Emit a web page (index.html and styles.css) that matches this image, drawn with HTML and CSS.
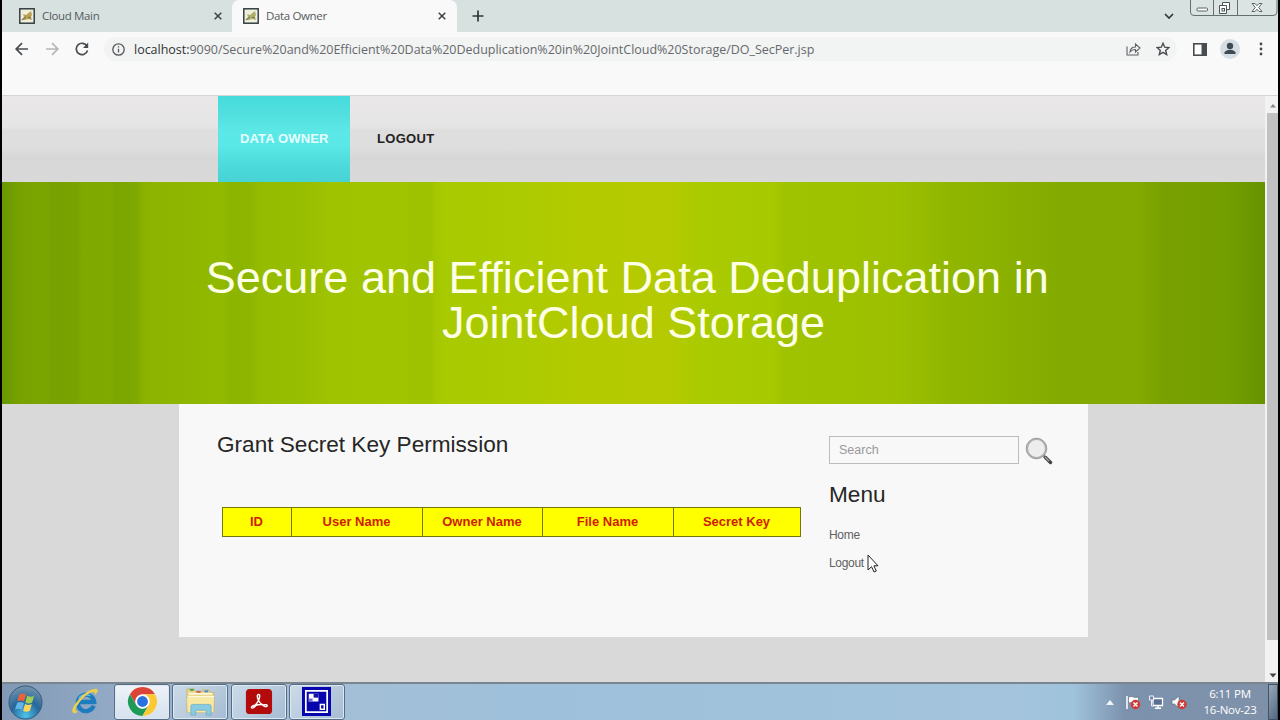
FILE: index.html
```html
<!DOCTYPE html>
<html lang="en">
<head>
  <meta charset="UTF-8">
  <title>Data Owner</title>
  <link rel="stylesheet" href="styles.css">
</head>
<body>
  <div class="screen">
    <div class="tabstrip">
      <div class="tab">
        <svg class="favicon" viewBox="0 0 16 16"><rect x=".8" y=".8" width="14.4" height="14.4" fill="#f0eedc" stroke="#263238" stroke-width="1.4"/><path d="M2 12l3-3-1-3 3 1 5-4 1 4-1 2 1 3-4-1-3 1z" fill="#b9a254"/><path d="M3 12l4-3M9 9l3 1" stroke="#6d7454" fill="none"/></svg>
        <span class="tab-title">Cloud Main</span>
        <svg class="close" viewBox="0 0 8 8"><path d="M.7.7l6.6 6.6M7.3.7L.7 7.3"/></svg>
      </div>
      <div class="tab active">
        <svg class="favicon" viewBox="0 0 16 16"><rect x=".8" y=".8" width="14.4" height="14.4" fill="#f0eedc" stroke="#263238" stroke-width="1.4"/><path d="M2 12l3-3-1-3 3 1 5-4 1 4-1 2 1 3-4-1-3 1z" fill="#aeb06a"/><path d="M3 12l4-3M9 9l3 1" stroke="#6d7454" fill="none"/></svg>
        <span class="tab-title">Data Owner</span>
        <svg class="close" viewBox="0 0 8 8"><path d="M.7.7l6.6 6.6M7.3.7L.7 7.3"/></svg>
      </div>
      <svg class="new-tab" viewBox="0 0 12 12"><path d="M6 .5v11M.5 6h11"/></svg>
      <svg class="tab-search" viewBox="0 0 10 6"><path d="M1 1l4 4 4-4"/></svg>
      <svg class="win-buttons" viewBox="0 0 88 16">
        <path d="M.5-1v13q0 3.500 3.500 3.500h79q4 0 4-3.500V-1M23.500 0v15.500M47.500 0v15.500" fill="#dbe4e3" stroke="#64706e"/>
        <rect x="7" y="8" width="10.500" height="3" rx="1" fill="#fff" stroke="#5b6462"/>
        <path d="M32.500 2.500h7v7h-7z" fill="#fff" stroke="#4c5553"/>
        <path d="M29.500 5.500h7v8h-7z" fill="#fff" stroke="#4c5553"/><rect x="32" y="8.500" width="2.500" height="2.500" fill="none" stroke="#4c5553"/>
        <path d="M62 3.500h3l2 2.200 2-2.200h3l-3.300 4 3.300 4h-3l-2-2.200-2 2.200h-3l3.300-4z" fill="#fff" stroke="#5b6462"/>
      </svg>
    </div>
    <div class="toolbar">
      <svg class="nav-icon" viewBox="0 0 14 14"><path d="M13 7H1.500M7 1.200L1.200 7 7 12.800"/></svg>
      <svg class="nav-icon dim" viewBox="0 0 14 14"><path d="M1 7h11.500M7 1.200L12.800 7 7 12.800"/></svg>
      <svg class="nav-icon" viewBox="0 0 14 14"><path d="M12 4.200A5.700 5.700 0 1 0 12.500 8.500"/><path d="M13.200.6v5.300H8z" fill="#484c50" stroke="none"/></svg>
      <div class="address">
        <svg class="info" viewBox="0 0 13 13"><circle cx="6.500" cy="6.500" r="5.700"/><path d="M6.500 5.800v3.800M6.500 3.200v1.400"/></svg>
        <span class="url"><b>localhost:</b>9090/Secure%20and%20Efficient%20Data%20Deduplication%20in%20JointCloud%20Storage/DO_SecPer.jsp</span>
        <svg class="share" viewBox="0 0 15 14"><path d="M1 4.500V13h11v-3"/><path d="M4 10q.5-5 5.500-5V2L14 6 9.500 10V7.500Q6 7.300 4 10z"/></svg>
        <svg class="star" viewBox="0 0 14 14"><path d="M7 1.300l1.700 3.900 4.200.4-3.200 2.800 1 4.200L7 10.400l-3.700 2.200 1-4.200L1.100 5.600l4.200-.4z"/></svg>
      </div>
      <svg class="panel" viewBox="0 0 14 13"><rect x=".8" y=".8" width="12.400" height="11.400" fill="#fff" stroke="#484c50" stroke-width="1.600"/><path d="M8.500 0H14v13H8.500z" fill="#484c50"/></svg>
      <svg class="avatar" viewBox="0 0 20 20"><circle cx="10" cy="10" r="10" fill="#d6dde3"/><circle cx="10" cy="7" r="3.200" fill="#3f4a57"/><path d="M4.500 15v-1.500q1.500-2.800 5.500-2.800t5.500 2.800V15z" fill="#3f4a57"/></svg>
      <svg class="dots" viewBox="0 0 4 14"><circle cx="2" cy="2" r="1.400"/><circle cx="2" cy="7" r="1.400"/><circle cx="2" cy="12" r="1.400"/></svg>
    </div>
    <div class="bookmarks"></div>

    <div class="viewport">
      <div class="page">
        <div class="menubar">
          <a class="selected">DATA OWNER</a>
          <a>LOGOUT</a>
        </div>
        <div class="header">
          <h1>Secure and Efficient Data Deduplication in&nbsp;<br>JointCloud Storage</h1>
        </div>
        <div class="content">
          <div class="mainbar">
            <h2>Grant Secret Key Permission</h2>
            <table>
              <tr>
                <th class="col-id">ID</th>
                <th class="col-user">User Name</th>
                <th class="col-owner">Owner Name</th>
                <th class="col-file">File Name</th>
                <th class="col-key">Secret Key</th>
              </tr>
            </table>
          </div>
          <div class="sidebar">
            <div class="search">
              <div class="search-box">Search</div>
              <svg class="lens" viewBox="0 0 28 28"><path d="M18 18l3 3" stroke="#999" stroke-width="3"/><path d="M20.500 20.500l5 5" stroke="#444" stroke-width="3.400" stroke-linecap="round"/><path d="M20 20l4 4" stroke="#aaa" stroke-width="1.200"/><circle cx="11.500" cy="11.500" r="9.300" fill="#ededed" stroke="#b2b2b2" stroke-width="1.800"/><circle cx="11.500" cy="11.500" r="10.300" fill="none" stroke="#808080" stroke-width=".7"/></svg>
            </div>
            <h2>Menu</h2>
            <ul>
              <li>Home</li>
              <li>Logout</li>
            </ul>
            <svg class="cursor" viewBox="0 0 12 19"><path d="M1 1v15l3.600-3.300L7 18l2.300-1-2.400-5.200H11z" fill="#fff" stroke="#222"/></svg>
          </div>
        </div>
      </div>
      <div class="scrollbar">
        <svg viewBox="0 0 8 5"><path d="M1 4.500L4 1l3 3.500z" fill="#888"/></svg>
        <div class="thumb"></div>
        <svg viewBox="0 0 8 5"><path d="M.5.500L4 4.500 7.500.5z" fill="#444"/></svg>
      </div>
    </div>

    <div class="taskbar">
      <svg class="start" viewBox="0 0 36 36">
        <defs>
          <radialGradient id="orb" cx=".5" cy=".9" r=".9"><stop offset="0" stop-color="#4cc4ea"/><stop offset=".5" stop-color="#27679b"/><stop offset="1" stop-color="#7895ac"/></radialGradient>
        </defs>
        <circle cx="18" cy="18" r="17" fill="url(#orb)" stroke="#31597c"/>
        <path d="M11.500 10q3.500-2.300 7 0l-2 7q-3.500-2-7 0z" fill="#e8633a"/>
        <path d="M19.800 11q3.500 2 7 0l-2 7q-3.500 2-7 0z" fill="#9fce55"/>
        <path d="M9.300 18.500q3.500-2 7 0l-2 7q-3.500-2-7 0z" fill="#62b5ea"/>
        <path d="M17.500 19.500q3.500 2 7 0l-2 7q-3.500 2-7 0z" fill="#fbd65a"/>
      </svg>
      <svg class="ie" viewBox="0 0 32 32">
        <path d="M25.500 21.500A8.500 8.500 0 1 1 26 17.500H11" fill="none" stroke="#1c7cbe" stroke-width="4.500"/>
        <path d="M10 14q4-6 12-3" fill="none" stroke="#62bdec" stroke-width="1.500"/>
        <path d="M5 29Q0 27 10 15T29 4q2 2-2 6 0-4-5-2Q14 12 8 22 5 27 9 27 7 30 5 29z" fill="#edcf4c"/>
      </svg>
      <div class="task on">
        <svg viewBox="0 0 32 32"><circle cx="16" cy="16" r="15" fill="#fff"/><path d="M3 8.500A15 15 0 0 1 29 8.500H16a7.500 7.500 0 0 0-6.500 11.200z" fill="#dc4437"/><path d="M3 8.500A15 15 0 0 0 16 31l6.500-11.300a7.500 7.500 0 0 1-13 0z" fill="#1d9a57"/><path d="M29 8.500A15 15 0 0 1 16 31l6.500-11.300A7.500 7.500 0 0 0 16 8.500z" fill="#fcc934"/><circle cx="16" cy="16" r="7" fill="#fff"/><circle cx="16" cy="16" r="5.600" fill="#2a72dd"/></svg>
      </div>
      <div class="task">
        <svg viewBox="0 0 32 32"><path d="M2 3h8l1 3h7V4h7l1 3h4v20H2V7z" fill="#ead98e" stroke="#c5ad62" stroke-width=".7"/><path d="M4 8h24M3 11h27" stroke="#fffbe0" stroke-width="1.500"/><path d="M5 4h4" stroke="#43a35a" stroke-width="2"/><path d="M12 6h4" stroke="#d15f52" stroke-width="2"/><path d="M20 5.500h4" stroke="#4689ca" stroke-width="2"/><path d="M2 12h28l-1 15H3z" fill="#f7e8a4"/><path d="M6 30V21q0-2 2-2h17q2 0 2 2v9h-5v-5H11v5z" fill="#8acbe4" stroke="#62a9c7" stroke-width=".7"/></svg>
      </div>
      <div class="task">
        <svg viewBox="0 0 32 32"><rect x="3" y="3" width="27" height="26" rx="4" fill="#b30b0b"/><path d="M16 15q-2.500-6 0-6.200t0 6.200q2 4 5 4.500 4-.8 4 .8c-.5 2-3.500.5-5-1q-4-.5-7 .8-2.500 3.500-4 2.500c-1.500-1.300 2-2.300 4-3.200q1.800-2 3-4.400z" fill="none" stroke="#fff" stroke-width="1.500"/></svg>
      </div>
      <div class="task">
        <svg viewBox="0 0 32 32"><path d="M1 1h30v30H1z" fill="#0705ad"/><path d="M5 5h22v22H5z" fill="none" stroke="#fff" stroke-width="1.800"/><path d="M8 8h10v8H8z" fill="#fff"/><path d="M13 8h5v4h-5z" fill="#1510a8"/><path d="M8 13h4v3H8z" fill="#6d6bd2"/><path d="M20 19h4v5h-4z" fill="none" stroke="#fff" stroke-width="1.500"/></svg>
      </div>
      <div class="tray">
        <svg class="tray-up" viewBox="0 0 8 5"><path d="M0 5l4-5 4 5z" fill="#f1f5fa"/></svg>
        <svg viewBox="0 0 16 16"><path d="M2 2v13" stroke="#fff" stroke-width="1.500"/><path d="M3.500 3q3-1 5 0t5 0v6q-3 1-5 0t-5 0z" fill="#fff" stroke="#59657b" stroke-width=".6"/><circle cx="10.500" cy="10.500" r="4.700" fill="#cf3a36"/><path d="M8.500 8.500l4 4m0-4l-4 4" stroke="#fff" stroke-width="1.400"/></svg>
        <svg viewBox="0 0 16 16"><path d="M5 4.500h9.500v7H5z" fill="#596f92" stroke="#fff" stroke-width="1.300"/><path d="M7 14.200h6M10 12v2" stroke="#fff" stroke-width="1.500"/><path d="M1.500 2h4v4h-4zM3.500 6v6H5" fill="#74859e" stroke="#eef"/></svg>
        <svg viewBox="0 0 16 16"><path d="M1 6h2.500L8 2v12l-4.500-4H1z" fill="#fff" stroke="#5d697d" stroke-width=".6"/><circle cx="11" cy="10.500" r="4.700" fill="#cf3a36"/><path d="M9 8.500l4 4m0-4l-4 4" stroke="#fff" stroke-width="1.400"/></svg>
      </div>
      <div class="clock">
        <span>6:11 PM</span>
        <span>16-Nov-23</span>
      </div>
      <div class="show-desktop"></div>
    </div>
  </div>
</body>
</html>
```
FILE: styles.css
```css
* {
  box-sizing: border-box;
}
body {
  margin: 0;
  background: #000;
  font-family: "Liberation Sans", Arial, sans-serif;
  overflow: hidden;
}
h1, h2, ul {
  margin: 0;
  padding: 0;
  font-weight: normal;
}
svg {
  display: block;
  flex: none;
}
.screen {
  width: 1276px;
  height: 720px;
  margin: 0 2px;
  display: flex;
  flex-direction: column;
}

/* browser window */
.tabstrip {
  height: 32px;
  background: #d7e1df;
  display: flex;
  align-items: center;
}
.tab {
  width: 230px;
  height: 32px;
  padding: 0 10px 0 17px;
  display: flex;
  align-items: center;
  font: 11.5px "Open Sans", sans-serif;
  color: #555b5d;
}
.tab.active {
  width: 225px;
  padding: 0 11px 0 11px;
  background: #f9f9f9;
  border-radius: 7px 7px 0 0;
}
.favicon {
  width: 16px;
  height: 16px;
  margin-right: 7px;
}
.tab-title {
  flex: 1;
  padding-bottom: 1px;
  letter-spacing: -0.35px;
}
.close {
  width: 8px;
  height: 8px;
  fill: none;
  stroke: #3c4244;
  stroke-width: 1.5;
}
.new-tab {
  width: 12px;
  height: 12px;
  margin-left: 15px;
  stroke: #30373a;
  stroke-width: 1.7;
}
.tab-search {
  width: 10px;
  height: 6px;
  margin-left: auto;
  margin-right: 16px;
  fill: none;
  stroke: #30373a;
  stroke-width: 1.7;
}
.win-buttons {
  width: 88px;
  height: 16px;
  align-self: flex-start;
}
.toolbar {
  height: 34px;
  padding: 0 15px 0 13px;
  background: #f9f9f9;
  display: flex;
  align-items: center;
}
.nav-icon {
  width: 14px;
  height: 14px;
  margin-right: 16px;
  fill: none;
  stroke: #484c50;
  stroke-width: 1.7;
}
.nav-icon.dim {
  stroke: #b4b6b8;
}
.address {
  width: 1073px;
  height: 24px;
  margin-left: -1px;
  padding-left: 8px;
  display: flex;
  align-items: center;
  background: #f2f3f3;
  border-radius: 12px;
}
.info {
  width: 13px;
  height: 13px;
  margin-right: 9px;
  fill: none;
  stroke: #53585c;
  stroke-width: 1.3;
}
.url {
  flex: 1;
  font: 12.5px "Open Sans", sans-serif;
  letter-spacing: -0.02px;
  color: #66696c;
  white-space: nowrap;
}
.url b {
  font-weight: normal;
  color: #303336;
}
.share {
  width: 15px;
  height: 14px;
  margin-right: 15px;
  fill: none;
  stroke: #5c6165;
  stroke-width: 1.1;
}
.star {
  width: 14px;
  height: 14px;
  margin-right: 7px;
  fill: none;
  stroke: #484c50;
  stroke-width: 1.4;
}
.panel {
  width: 14px;
  height: 13px;
  margin-left: auto;
}
.avatar {
  width: 20px;
  height: 20px;
  margin: 0 19px 0 13px;
}
.dots {
  width: 4px;
  height: 14px;
  fill: #484c50;
}
.bookmarks {
  height: 29px;
  background: #f9f9f9;
}
.viewport {
  height: 587px;
  display: flex;
  border-top: 1px solid #d6d5d5;
}
.scrollbar {
  width: 13px;
  padding: 7px 0 4px 2px;
  background: #f2f2f2;
  display: flex;
  flex-direction: column;
  align-items: center;
}
.scrollbar svg {
  width: 8px;
  height: 5px;
}
.thumb {
  width: 11px;
  height: 527px;
  margin: 5px 0 auto;
  background: #c1c1c1;
}

/* web page */
.page {
  width: 1263px;
  background: #d9d9d9;
}
.menubar {
  height: 86px;
  padding-left: 216px;
  display: flex;
  background: linear-gradient(#e9e7e8, #e6e5e5 36%, #dfdede 40%, #dedede 60%, #d8d7d8 72%, #d9d9d9);
}
.menubar a {
  padding: 0 26px 0 27px;
  line-height: 86px;
  font-size: 13px;
  font-weight: bold;
  letter-spacing: 0.3px;
  color: #222;
}
.menubar .selected {
  width: 132px;
  padding: 0 0 0 22px;
  letter-spacing: 0.15px;
  color: #e6ffff;
  background: linear-gradient(#46dbdb, #53e0df 24%, #5be8e7 42%, #5ae8e7 58%, #4bd8d8 85%, #48d3d4);
}
.header {
  height: 222px;
  padding-top: 73px;
  text-align: center;
  background:
    linear-gradient(90deg,
      transparent 3.5%, rgba(70,120,0,.1) 4%, rgba(70,120,0,.1) 6%, transparent 6.3%,
      transparent 8.5%, rgba(70,120,0,.1) 9%, rgba(70,120,0,.1) 10.8%, transparent 11%,
      transparent 17.5%, rgba(80,130,0,.09) 18%, rgba(80,130,0,.09) 19.5%, transparent 20.5%,
      transparent 32%, rgba(110,150,0,.06) 32.2%, rgba(110,150,0,.06) 34%, transparent 34.2%),
    linear-gradient(90deg, #689a00, #78a200 1.5%, #7fa800 6%, #82ab00 10%, #8cb300 11.5%, #91b900 17%, #98be00 24%, #a0c300 26%, #a2c500 34%, #a8ca00 35%, #adcb00 42%, #b4ca00 46%, #b5ca00 53%, #aacb00 55%, #a7c900 61%, #a0c300 62%, #9cc000 71%, #90b600 75%, #8bb200 79%, #83aa00 84%, #83aa00 90%, #78a000 92%, #749f00 97%, #669200);
}
.header h1 {
  font-size: 45px;
  line-height: 45px;
  letter-spacing: 0.02px;
  color: #fdffe6;
}
.content {
  width: 909px;
  height: 233px;
  margin-left: 177px;
  display: flex;
  background: #f8f8f8;
}
.content h2 {
  font-size: 22.6px;
  line-height: 28px;
  color: #262626;
}
.mainbar {
  width: 650px;
  padding: 27px 0 0 38px;
}
table {
  width: 579px;
  margin: 48px 0 0 5px;
  border-collapse: collapse;
  table-layout: fixed;
}
th {
  height: 29px;
  padding: 0 1px 2px 0;
  border: 1px solid #76760f;
  background: #ff0;
  color: #d01d00;
  font-size: 13px;
}
.col-id { width: 69px; }
.col-user { width: 131px; }
.col-owner { width: 120px; }
.col-file { width: 131px; }
.col-key { width: 127px; }
.sidebar {
  position: relative;
  padding-top: 32px;
}
.search {
  display: flex;
}
.search-box {
  width: 190px;
  height: 28px;
  padding-left: 9px;
  border: 1px solid #bcbcbc;
  font-size: 12.5px;
  line-height: 26px;
  color: #9a9a9a;
}
.lens {
  width: 28px;
  height: 28px;
  margin: 1px 0 0 6px;
}
.sidebar h2 {
  margin-top: 16px;
}
.sidebar ul {
  margin-top: 12px;
  list-style: none;
  font-size: 12px;
  letter-spacing: -0.3px;
  line-height: 28px;
  color: #5f5f5f;
}
.cursor {
  position: absolute;
  left: 38px;
  top: 150px;
  width: 12px;
  height: 19px;
}

/* windows taskbar */
.taskbar {
  height: 38px;
  display: flex;
  align-items: center;
  border-top: 2px solid #79858f;
  background: linear-gradient(90deg, #8199b4, #91a9c5 8%, #a5bed6 22%, #9fc0da 40%, #a3c4dc 80%, #9fc3dc 84%, #7c92ad 88%, #7f91a9);
}
.start {
  width: 35px;
  height: 35px;
  margin-left: 6px;
}
.ie {
  width: 31px;
  height: 31px;
  margin: -3px 14px 0 26px;
}
.task {
  width: 56px;
  height: 36px;
  margin-right: 2.3px;
  display: flex;
  align-items: center;
  justify-content: center;
  border: 1px solid #566d84;
  border-radius: 3px;
  background: linear-gradient(135deg, #ccdbe9, #a6bcd2);
  box-shadow: inset 0 0 0 1px #dce8f3;
}
.task.on {
  background: linear-gradient(#eef3f8, #d5e1ee);
}
.task svg {
  width: 31px;
  height: 31px;
  margin-top: -2px;
}
.tray {
  margin-left: auto;
  display: flex;
  align-items: center;
  gap: 7px;
}
.tray svg {
  width: 16px;
  height: 16px;
}
.tray .tray-up {
  width: 8px;
  height: 5px;
  margin-right: 4px;
}
.clock {
  width: 81px;
  padding-left: 5px;
  display: flex;
  flex-direction: column;
  align-items: center;
  font: 11.5px/16px "Open Sans", sans-serif;
  color: #fff;
  letter-spacing: -0.2px;
}
.show-desktop {
  width: 10px;
  height: 36px;
  border: 1px solid #415369;
  background: linear-gradient(120deg, #99a8b8, #536980);
}
```
